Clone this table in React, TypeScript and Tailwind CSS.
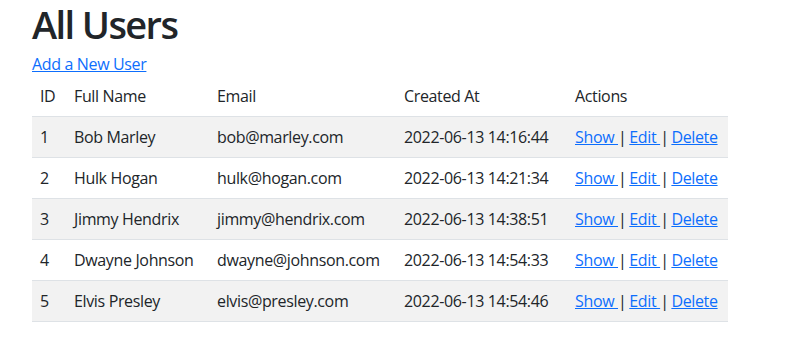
import React from "react";

type User = {
  id: number;
  name: string;
  email: string;
  createdAt: string;
};

const users: User[] = [
  { id: 1, name: "Bob Marley", email: "bob@marley.com", createdAt: "2022-06-13 14:16:44" },
  { id: 2, name: "Hulk Hogan", email: "hulk@hogan.com", createdAt: "2022-06-13 14:21:34" },
  { id: 3, name: "Jimmy Hendrix", email: "jimmy@hendrix.com", createdAt: "2022-06-13 14:38:51" },
  { id: 4, name: "Dwayne Johnson", email: "dwayne@johnson.com", createdAt: "2022-06-13 14:54:33" },
  { id: 5, name: "Elvis Presley", email: "elvis@presley.com", createdAt: "2022-06-13 14:54:46" },
];

export default function App() {
  return (
    <div className="min-h-screen bg-white text-[#212529] font-['Open_Sans',sans-serif] text-base leading-6 tracking-[-0.35px]">
      <div className="ml-[32px] w-[696px]">
        <h1 className="text-[38px] leading-[48px] font-semibold tracking-[-1.6px] mb-1">All Users</h1>
        <a href="#" className="text-[#0d6efd] underline">
          Add a New User
        </a>
        <table className="w-full table-fixed border-collapse mt-0 mb-4 text-left">
          <colgroup>
            <col className="w-[34px]" />
            <col className="w-[143px]" />
            <col className="w-[187px]" />
            <col className="w-[171px]" />
            <col className="w-[161px]" />
          </colgroup>
          <thead>
            <tr className="border-b border-[#dee2e6]">
              <th className="font-normal px-2 py-2">ID</th>
              <th className="font-normal px-2 py-2">Full Name</th>
              <th className="font-normal px-2 py-2">Email</th>
              <th className="font-normal px-2 py-2">Created At</th>
              <th className="font-normal px-2 py-2">Actions</th>
            </tr>
          </thead>
          <tbody>
            {users.map((u, i) => (
              <tr
                key={u.id}
                className={`border-b border-[#dee2e6] ${i % 2 === 0 ? "bg-[#f2f2f2]" : "bg-white"}`}
              >
                <td className="px-2 py-2">{u.id}</td>
                <td className="px-2 py-2 whitespace-nowrap">{u.name}</td>
                <td className="px-2 py-2 whitespace-nowrap">{u.email}</td>
                <td className="px-2 py-2 whitespace-nowrap">{u.createdAt}</td>
                <td className="px-2 py-2 whitespace-nowrap">
                  <a href="#" className="text-[#0d6efd] underline">Show </a>
                  <span className="[word-spacing:-1px]">| </span>
                  <a href="#" className="text-[#0d6efd] underline">Edit </a>
                  <span className="[word-spacing:-1px]">| </span>
                  <a href="#" className="text-[#0d6efd] underline">Delete</a>
                </td>
              </tr>
            ))}
          </tbody>
        </table>
      </div>
    </div>
  );
}
